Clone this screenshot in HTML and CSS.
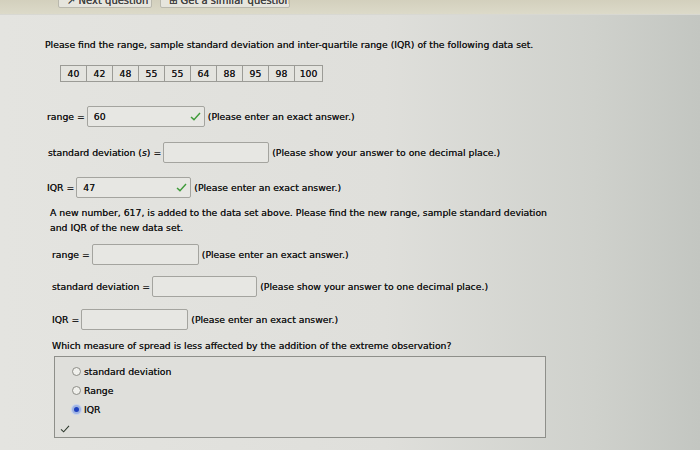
FILE: index.html
```html
<!DOCTYPE html>
<html>
<head>
<meta charset="utf-8">
<link rel="stylesheet" href="styles.css">
</head>
<body>
<div class="topband">
  <div class="btn btn-next">↗ Next question</div>
  <div class="btn btn-similar">⊞ Get a similar question</div>
</div>
<div class="page">
  <p class="heading">Please find the range, sample standard deviation and inter-quartile range (IQR) of the following data set.</p>
  <div class="datarow">
    <table class="data">
      <tr>
        <td>40</td><td>42</td><td>48</td><td>55</td><td>55</td><td>64</td><td>88</td><td>95</td><td>98</td><td class="wide">100</td>
      </tr>
    </table>
  </div>

  <div class="row r1">
    <span class="label">range =</span>
    <span class="box b1"><span class="val">60</span><svg class="check" viewBox="0 0 12 10" width="11" height="9"><path d="M1 5.5 L4.3 8.5 L11 1.2" fill="none" stroke="#3f9b3a" stroke-width="1.6"/></svg></span>
    <span class="hint">(Please enter an exact answer.)</span>
  </div>

  <div class="row r2">
    <span class="label">standard deviation (<i>s</i>) =</span>
    <span class="box b2"></span>
    <span class="hint">(Please show your answer to one decimal place.)</span>
  </div>

  <div class="row r3">
    <span class="label">IQR =</span>
    <span class="box b3"><span class="val">47</span><svg class="check" viewBox="0 0 12 10" width="11" height="9"><path d="M1 5.5 L4.3 8.5 L11 1.2" fill="none" stroke="#3f9b3a" stroke-width="1.6"/></svg></span>
    <span class="hint">(Please enter an exact answer.)</span>
  </div>

  <p class="para">A new number, 617, is added to the data set above. Please find the new range, sample standard deviation and IQR of the new data set.</p>

  <div class="row r4">
    <span class="label">range =</span>
    <span class="box b4"></span>
    <span class="hint">(Please enter an exact answer.)</span>
  </div>

  <div class="row r5">
    <span class="label">standard deviation =</span>
    <span class="box b5"></span>
    <span class="hint">(Please show your answer to one decimal place.)</span>
  </div>

  <div class="row r6">
    <span class="label">IQR =</span>
    <span class="box b6"></span>
    <span class="hint">(Please enter an exact answer.)</span>
  </div>

  <p class="question">Which measure of spread is less affected by the addition of the extreme observation?</p>
  <div class="answers">
    <div class="opt"><span class="radio"></span>standard deviation</div>
    <div class="opt"><span class="radio"></span>Range</div>
    <div class="opt"><span class="radio on"></span>IQR</div>
    <svg class="acheck" viewBox="0 0 12 10" width="10" height="8"><path d="M1 5.5 L4.3 8.5 L11 1.2" fill="none" stroke="#2e3a2e" stroke-width="1.4"/></svg>
  </div>
</div>
</body>
</html>
```
FILE: styles.css
```css
html, body {
  margin: 0;
  padding: 0;
}
body {
  width: 700px;
  height: 450px;
  overflow: hidden;
  background: linear-gradient(to right, #e4e4e0 0%, #dfdfdb 55%, #cfd1cc 85%, #c3c6c1 100%);
  font-family: "DejaVu Sans", Verdana, sans-serif;
  font-size: 9.3px;
  color: #151515;
  text-shadow: 0 0 0.4px #333;
}
.topband {
  height: 14px;
  overflow: hidden;
  display: flex;
  gap: 8px;
  padding-left: 58px;
  background: linear-gradient(to bottom, #d3d0bd, #dcdac9);
  border-bottom: 1px solid #d8d8d2;
}
.btn {
  height: 16px;
  margin-top: -8px;
  line-height: 16px;
  border: 1px solid #b9b8ad;
  border-radius: 2px;
  background: #e6e5dd;
  color: #444;
  font-size: 10px;
  padding: 0 8px;
  white-space: nowrap;
  overflow: hidden;
  box-sizing: border-box;
}
.btn-next { width: 94px; }
.btn-similar { width: 130px; }
.page {
  padding-left: 45px;
}
.heading {
  margin: 24px 0 0 0;
  line-height: 12px;
}
.datarow {
  padding-left: 15px;
  margin-top: 14px;
}
table.data {
  border-collapse: collapse;
  border: 1px solid #555;
}
table.data td {
  width: 25px;
  height: 15px;
  padding: 0;
  text-align: center;
  border: 1px solid #9b9b96;
  background: #e4e4df;
  line-height: 15px;
}
table.data td.wide { width: 27px; }
.row {
  display: flex;
  align-items: center;
  height: 22px;
}
.label { white-space: nowrap; }
.box {
  height: 21px;
  border: 1px solid #a4a49f;
  border-radius: 2px;
  background: #e7e7e3;
  margin: 0 3px 0 2px;
  display: flex;
  align-items: center;
  justify-content: space-between;
  box-sizing: border-box;
  padding: 0 3px 0 6px;
}
.check { display: block; }
.hint { white-space: nowrap; }
.r1 { margin-top: 23px; padding-left: 2px; }
.b1 { width: 118px; }
.r2 { margin-top: 14px; padding-left: 3px; }
.b2 { width: 106px; }
.r3 { margin-top: 13px; padding-left: 2px; }
.b3 { width: 115px; }
.para {
  margin: 7px 0 0 5px;
  width: 510px;
  line-height: 15px;
}
.r4 { margin-top: 8px; padding-left: 7px; }
.b4 { width: 107px; }
.r5 { margin-top: 10px; padding-left: 7px; }
.b5 { width: 105px; }
.r6 { margin-top: 11px; padding-left: 7px; }
.b6 { width: 107px; }
.question {
  margin: 10px 0 0 7px;
  line-height: 12px;
}
.answers {
  margin: 4px 0 0 9px;
  width: 492px;
  height: 82px;
  box-sizing: border-box;
  border: 1px solid #8e8f8a;
  background: #dfdfdb;
  padding: 5px 0 0 17px;
  position: relative;
}
.opt {
  display: flex;
  align-items: center;
  height: 19px;
  gap: 3px;
}
.radio {
  width: 9px;
  height: 9px;
  border-radius: 50%;
  border: 1px solid #8d8d88;
  background: #f0f0ec;
  box-sizing: border-box;
}
.radio.on {
  border: 2px solid #9fb3e0;
  background: #1c3fbf;
  box-shadow: 0 0 0 1px #c6d2ef;
}
.acheck {
  position: absolute;
  left: 5px;
  bottom: 4px;
}
```
